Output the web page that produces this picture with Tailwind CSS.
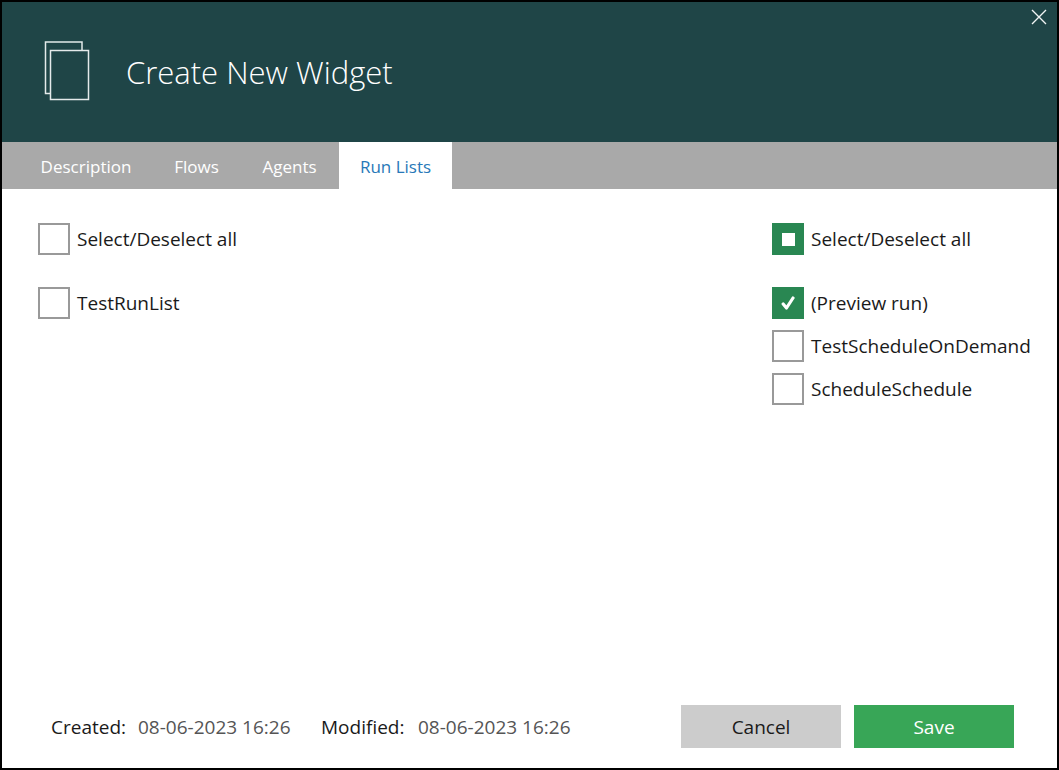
<!DOCTYPE html>
<html lang="en">
<head>
    <meta charset="UTF-8">
    <meta name="viewport" content="width=device-width, initial-scale=1.0">
    <title>Create New Widget</title>
    <script src="https://cdn.jsdelivr.net/npm/@tailwindcss/browser@4"></script>
</head>
<body class="min-h-screen flex flex-col bg-white border-2 border-black font-['Segoe_UI','Open_Sans',sans-serif] text-[19px] leading-6 text-[#1a1a1a]">
    <header class="relative h-[140px] shrink-0 flex items-center gap-[36px] pl-[42px] bg-[#1f4547] text-white">
        <svg class="w-[46px] h-[62px] shrink-0" viewBox="0 0 46 62" fill="none" stroke="#e4eaea" stroke-width="1.5" aria-hidden="true">
            <path d="M6 52.500H1.500V1H38v8"/>
            <path d="M6.500 9.500h38v49h-38z"/>
        </svg>
        <h1 class="text-[31px] leading-10 font-[350]">Create New Widget</h1>
        <button type="button" aria-label="Close" class="absolute top-[6px] right-[9px] p-px">
            <svg class="w-4 h-4" viewBox="0 0 16 16" fill="none" stroke="#f1f5f5" stroke-width="1.4">
                <path d="M1 1l14 14M15 1L1 15"/>
            </svg>
        </button>
    </header>

    <nav class="h-[47px] shrink-0 flex pl-[17px] bg-[#a9a9a9] text-white text-center text-[17px] leading-[50px]">
        <a href="#description" class="w-[134px]">Description</a>
        <a href="#flows" class="w-[87px]">Flows</a>
        <a href="#agents" class="w-[99px]">Agents</a>
        <a href="#runlists" aria-current="page" class="w-[113px] bg-white text-[#2878b8]">Run Lists</a>
    </nav>

    <main class="grow flex justify-between pt-[34px] pl-9">
        <section class="flex flex-col gap-8">
            <label class="flex gap-[7px]">
                <input type="checkbox" class="appearance-none w-8 h-8 shrink-0 border-2 border-[#999]">
                <span class="leading-8">Select/Deselect all</span>
            </label>
            <label class="flex gap-[7px]">
                <input type="checkbox" class="appearance-none w-8 h-8 shrink-0 border-2 border-[#999]">
                <span class="leading-8">TestRunList</span>
            </label>
        </section>

        <section class="w-[285px] flex flex-col gap-8">
            <label class="flex gap-[7px]">
                <span class="grid w-8 h-8 shrink-0 place-items-center">
                    <input type="checkbox" id="scheduleAll" class="peer col-start-1 row-start-1 appearance-none w-8 h-8 border-2 border-[#999] indeterminate:border-[#298752] indeterminate:bg-[#298752]">
                    <span class="col-start-1 row-start-1 w-[13px] h-[13px] bg-white z-10 pointer-events-none invisible peer-indeterminate:visible"></span>
                </span>
                <span class="leading-8">Select/Deselect all</span>
            </label>
            <div class="flex flex-col gap-[11px]">
                <label class="flex gap-[7px]">
                    <span class="grid w-8 h-8 shrink-0 place-items-center">
                        <input type="checkbox" checked class="peer col-start-1 row-start-1 appearance-none w-8 h-8 border-2 border-[#999] checked:border-[#298752] checked:bg-[#298752]">
                        <svg class="col-start-1 row-start-1 w-[14px] h-[14px] z-10 pointer-events-none invisible peer-checked:visible" viewBox="0 0 14 14" fill="none" stroke="#fff" stroke-width="3.200" stroke-linecap="round" stroke-linejoin="round">
                            <path d="M2.200 8l3.300 4L12 2"/>
                        </svg>
                    </span>
                    <span class="leading-8">(Preview run)</span>
                </label>
                <label class="flex gap-[7px]">
                    <input type="checkbox" class="appearance-none w-8 h-8 shrink-0 border-2 border-[#999]">
                    <span class="leading-8">TestScheduleOnDemand</span>
                </label>
                <label class="flex gap-[7px]">
                    <input type="checkbox" class="appearance-none w-8 h-8 shrink-0 border-2 border-[#999]">
                    <span class="leading-8">ScheduleSchedule</span>
                </label>
            </div>
        </section>
    </main>

    <footer class="flex items-center justify-between pl-[49px] pr-[43px] pb-5">
        <dl class="flex whitespace-nowrap">
            <dt class="w-[87px]">Created:</dt>
            <dd class="w-[183px] text-[#555]">08-06-2023 16:26</dd>
            <dt class="w-[97px]">Modified:</dt>
            <dd class="text-[#555]">08-06-2023 16:26</dd>
        </dl>
        <div class="flex gap-[13px]">
            <button type="button" class="w-[160px] h-[43px] bg-[#ccc]">Cancel</button>
            <button type="button" class="w-[160px] h-[43px] bg-[#38a657] text-white">Save</button>
        </div>
    </footer>

    <script>
        document.getElementById('scheduleAll').indeterminate = true;
    </script>
</body>
</html>
